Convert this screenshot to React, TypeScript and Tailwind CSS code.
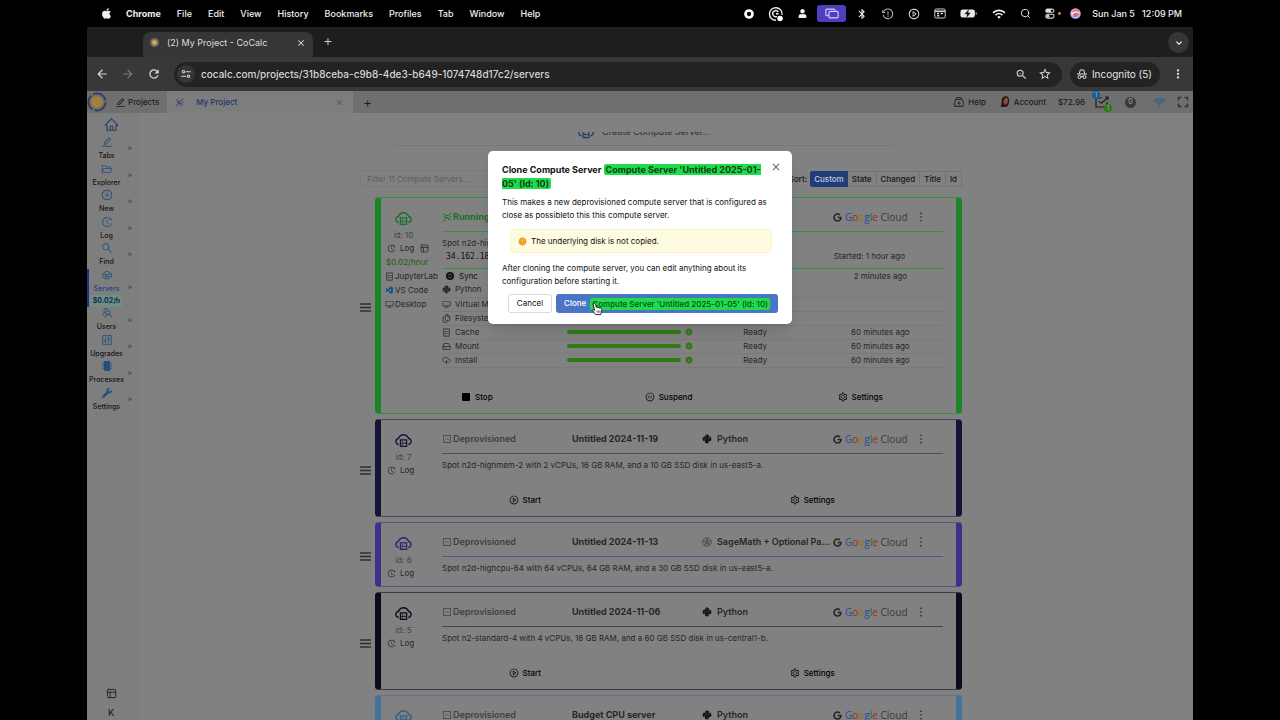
import React from "react";
import {
  AiFillApple,
  AiFillCheckCircle,
  AiFillExclamationCircle,
  AiOutlineCloudServer,
  AiOutlineControl,
  AiOutlineDatabase,
  AiOutlineDesktop,
  AiOutlineEdit,
  AiOutlineFolderOpen,
  AiOutlineHistory,
  AiOutlineHome,
  AiOutlineMedicineBox,
  AiOutlineMinusSquare,
  AiOutlineMore,
  AiOutlinePauseCircle,
  AiOutlinePlayCircle,
  AiOutlinePlusCircle,
  AiOutlineSearch,
  AiOutlineSetting,
  AiOutlineTeam,
  AiOutlineWifi,
} from "react-icons/ai";
import { FaGoogle, FaMicrochip, FaPython, FaUser, FaWrench } from "react-icons/fa";
import {
  MdArrowBack,
  MdArrowForward,
  MdBluetooth,
  MdClose,
  MdExpandMore,
  MdFullscreen,
  MdMoreVert,
  MdOutlineZoomOut,
  MdRefresh,
  MdStarBorder,
  MdWifi,
} from "react-icons/md";
import { VscVscode } from "react-icons/vsc";
import { CloudUpload, Files, HardDrive, PanelsTopLeft, Search } from "lucide-react";

type Icon = React.ComponentType<{ className?: string }>;

function BoltIcon({ className }: { className?: string }) {
  return (
    <svg viewBox="0 0 16 16" className={className} fill="none" stroke="currentColor" strokeWidth="1.500" strokeLinecap="round" strokeLinejoin="round">
      <path d="M14.500 1.500 10 5.500H5.500L4 8.500l4 .5-6.500 6M8 9l3.500.5L10 13" />
      <path d="M3 3.500h1.500M13.500 7.500h1M13.500 12.500h.5" />
    </svg>
  );
}

function IncognitoIcon({ className }: { className?: string }) {
  return (
    <svg viewBox="0 0 24 24" className={className} fill="none" stroke="currentColor" strokeWidth="2">
      <path d="M2 12h20M6.500 11.500 8.500 4h7l2 7.500" />
      <circle cx="7" cy="18" r="3" />
      <circle cx="17" cy="18" r="3" />
      <path d="M10 17.500q2-1 4 0" />
    </svg>
  );
}

function TuneIcon({ className }: { className?: string }) {
  return (
    <svg viewBox="0 0 16 16" className={className} fill="none" stroke="currentColor" strokeWidth="1.700" strokeLinecap="round">
      <circle cx="4" cy="4.500" r="2" />
      <path d="M8.500 4.500H15M1 11.500h6.500" />
      <circle cx="12" cy="11.500" r="2" />
    </svg>
  );
}

function SageIcon({ className }: { className?: string }) {
  return (
    <svg viewBox="0 0 16 16" className={className} fill="none" stroke="#3a3a3a" strokeWidth="1.100" strokeLinejoin="round">
      <circle cx="8" cy="8" r="6.800" />
      <path d="m8 4.500 3.500 2.500-1.300 4H5.800L4.500 7zM8 4.500V1.200M11.500 7l3-1M10.200 11l2 2.500M5.800 11l-2 2.500M4.500 7l-3-1M8 8.500v-4M8 8.500 5.800 11M8 8.500l2.200 2.500" />
    </svg>
  );
}

function HandleIcon({ className }: { className?: string }) {
  return (
    <svg viewBox="0 0 11 9" className={className} stroke="currentColor" strokeWidth="1.300">
      <path d="M0 1h11M0 4.500h11M0 8h11" />
    </svg>
  );
}

function CoCalcLogo({ className }: { className?: string }) {
  return (
    <svg viewBox="0 0 20 20" className={className}>
      <circle cx="10" cy="10" r="8.600" fill="none" stroke="#2a3f66" strokeWidth="1.800" strokeDasharray="16 2" />
      <circle cx="10" cy="10" r="5.800" fill="#a5803c" />
    </svg>
  );
}

const menus = ["File", "Edit", "View", "History", "Bookmarks", "Profiles", "Tab", "Window", "Help"];

function MenuBar() {
  return (
    <header className="flex h-[27px] items-center justify-between bg-black pr-[11px] pl-[13px] text-[9px] font-medium text-[#f0f0f0]">
      <nav className="flex items-center gap-4">
        <AiFillApple className="-mr-[3px] size-[13px]" />
        <span className="font-bold">Chrome</span>
        {menus.map((m) => (
          <span key={m}>{m}</span>
        ))}
      </nav>
      <div className="flex items-center gap-[14px]">
        <svg viewBox="0 0 12 12" className="size-[10px]">
          <circle cx="6" cy="6" r="4.200" fill="none" stroke="#fff" strokeWidth="3.200" />
        </svg>
        <svg viewBox="0 0 16 16" className="size-4" fill="none" stroke="#eee" strokeWidth="1.400">
          <path d="M14 9A6.300 6.300 0 1 0 8 14.300" />
          <path d="M10.200 6A3 3 0 1 0 9 10.300M8 7.800h2.500" />
          <circle cx="12" cy="12.500" r="2.800" fill="#fff" stroke="none" />
        </svg>
        <FaUser className="size-[9px]" />
        <span className="-mx-1 flex h-[17px] w-[29px] items-center justify-center rounded-[3px] bg-[#4f3fbf]">
          <svg viewBox="0 0 16 12" className="h-[11px] w-[14px]" fill="none" stroke="#cfd0ff" strokeWidth="1.300">
            <path d="M4 8.500H2.500A1.500 1.500 0 0 1 1 7V2.500A1.500 1.500 0 0 1 2.500 1H10a1.500 1.500 0 0 1 1.500 1.500" />
            <rect x="4.500" y="3.500" width="10.500" height="7.500" rx="1.500" />
          </svg>
        </span>
        <MdBluetooth className="size-3" />
        <svg viewBox="0 0 16 16" className="size-3" fill="none" stroke="#b5b5b5" strokeWidth="1.400">
          <path d="M2 5a6.500 6.500 0 1 1-.5 4" />
          <path d="M1 3v3h3M8 4.500v4.500M8 10.300v1.300" />
        </svg>
        <AiOutlinePlayCircle className="size-3" />
        <svg viewBox="0 0 16 14" className="h-[11px] w-3" fill="none" stroke="#d8d8d8" strokeWidth="1.300">
          <rect x="1" y="1" width="14" height="12" rx="2" />
          <path d="M1 4h14M4 7h3M9 7h3M4 10h3" strokeWidth="1.700" />
        </svg>
        <svg viewBox="0 0 20 10" className="h-[9px] w-[18px]">
          <rect x="0.500" y="0.500" width="16" height="9" rx="2.500" fill="#e8e8e8" />
          <path d="M18 3.500v3" stroke="#888" strokeWidth="1.500" />
          <path d="M10 0 5 5.700h3L7 10l5-5.700H9z" fill="#111" />
        </svg>
        <MdWifi className="size-[14px]" />
        <Search className="size-[11px]" />
        <svg viewBox="0 0 18 12" className="h-[11px] w-[17px]">
          <rect x="0" y="0.500" width="10" height="4.800" rx="2.400" fill="#ddd" />
          <circle cx="7.500" cy="2.900" r="1.400" fill="#000" />
          <rect x="0.600" y="6.800" width="9" height="4.200" rx="2.100" fill="none" stroke="#ddd" strokeWidth="1.200" />
          <circle cx="3" cy="8.900" r="1.500" fill="#ddd" />
          <circle cx="15.500" cy="6" r="1.600" fill="#d98a3d" />
        </svg>
        <svg viewBox="0 0 12 12" className="-ml-[6px] size-[11px]">
          <circle cx="6" cy="6" r="5.700" fill="#c9b8ea" />
          <circle cx="6.500" cy="5.500" r="3.800" fill="#f0606d" />
          <path d="M2 7q4-5 8-1" stroke="#fff" strokeWidth="1.200" fill="none" />
          <path d="M3 9q4 1 6-2" stroke="#5aa0f0" strokeWidth="1.200" fill="none" />
        </svg>
        <span className="-ml-[3px] whitespace-pre">Sun Jan 5&nbsp;&nbsp; 12:09 PM</span>
      </div>
    </header>
  );
}

function BrowserChrome() {
  return (
    <>
      <div className="flex h-[30px] items-end bg-[#1e1e1e] pl-14">
        <div className="flex h-[25px] w-[170px] items-center gap-2 rounded-t-lg bg-[#363636] px-[7px] pb-1 text-[9px] text-[#dedede]">
          <span className="flex size-[9px] rounded-full border-2 border-[#6e6a5c] bg-[#d5a44e]" />
          <span className="flex-1">(2) My Project - CoCalc</span>
          <button aria-label="Close tab">
            <MdClose className="size-[10px]" />
          </button>
        </div>
        <button aria-label="New tab" className="ml-[10px] h-[30px] pb-[3px] text-[15px] leading-[27px] font-light text-[#d0d0d0]">
          +
        </button>
        <button aria-label="Search tabs" className="mr-1 mb-1 ml-auto flex size-[21px] items-center justify-center rounded-full bg-[#363636] text-white">
          <MdExpandMore className="size-3" />
        </button>
      </div>
      <div className="flex h-[34px] items-center bg-[#383838] px-2 text-[#d6d6d6]">
        <button aria-label="Back">
          <MdArrowBack className="size-[14px]" />
        </button>
        <button aria-label="Forward" className="ml-3 text-[#777]">
          <MdArrowForward className="size-[14px]" />
        </button>
        <button aria-label="Reload" className="mr-[13px] ml-3">
          <MdRefresh className="size-[14px]" />
        </button>
        <div className="flex h-[25px] flex-1 items-center gap-[6px] rounded-full bg-[#232323] pr-[10px] pl-[3px]">
          <span className="flex size-[18px] items-center justify-center rounded-full bg-[#353535]">
            <TuneIcon className="size-[10px]" />
          </span>
          <input
            aria-label="Address"
            readOnly
            value="cocalc.com/projects/31b8ceba-c9b8-4de3-b649-1074748d17c2/servers"
            className="min-w-0 flex-1 bg-transparent text-[10px] font-medium outline-none"
          />
          <MdOutlineZoomOut className="size-[13px]" />
          <MdStarBorder className="ml-1 size-[14px]" />
        </div>
        <button className="ml-2 flex h-[25px] items-center gap-1 rounded-full bg-[#232323] pr-2 pl-[6px] text-[10px] text-[#e4e4e4]">
          <IncognitoIcon className="size-3" />
          Incognito (5)
        </button>
        <button aria-label="Browser menu" className="ml-[11px]">
          <MdMoreVert className="size-[14px]" />
        </button>
      </div>
    </>
  );
}

function AppNav() {
  return (
    <div className="flex h-[22px] items-center bg-[#6f6f6f] text-[8px] font-medium text-[#1c1c1c]">
      <CoCalcLogo className="size-5" />
      <a href="#projects" className="flex h-full items-center gap-[2px] px-2">
        <AiOutlineEdit className="size-[11px]" />
        Projects
      </a>
      <div className="flex h-full w-[186px] items-center bg-[#7d7d7d] pr-[9px] pl-2 text-[#1d3566]">
        <BoltIcon className="size-[9px]" />
        <span className="ml-3 flex-1">My Project</span>
        <MdClose className="size-[9px] text-[#555]" />
      </div>
      <button aria-label="Open project" className="ml-[10px] text-[13px] leading-none font-normal">
        +
      </button>
      <div className="ml-auto flex items-center pr-px">
        <a href="#help" className="flex items-center gap-[3px]">
          <AiOutlineMedicineBox className="size-3" />
          Help
        </a>
        <a href="#account" className="ml-[14px] flex items-center gap-1">
          <svg viewBox="0 0 12 14" className="h-3 w-[10px]">
            <path d="M7 0C3 0 2 3 2 6c0 3-1 5-1 7h6c3-1 4-4 4-7 0-4-1-6-4-6z" fill="#2b1a14" />
            <ellipse cx="7" cy="6" rx="2.500" ry="4" fill="#80523b" transform="rotate(12 7 6)" />
          </svg>
          Account
        </a>
        <span className="ml-3">$72.96</span>
        <span className="relative ml-[10px] flex">
          <svg viewBox="0 0 14 12" className="h-3 w-[14px]" fill="none" stroke="#1c1c1c" strokeWidth="1.200">
            <path d="M7 2H1v9h11V6" />
            <path d="m4 5.500 2.500 1.500L13 1.500M10 1h3v3" />
          </svg>
          <span className="absolute -top-[5px] -left-[3px] size-[8px] rounded-full bg-[#14609c] text-center text-[6px] leading-[8px] text-[#aaa]">1</span>
          <span className="absolute -right-[3px] -bottom-[4px] size-[8px] rounded-full bg-[#2c7a17] text-center text-[6px] leading-[8px] text-[#aaa]">1</span>
        </span>
        <span className="ml-4 flex size-[11px] items-center justify-center rounded-full bg-[#3a3a3a] text-[7px] text-[#999]">0</span>
        <AiOutlineWifi className="ml-[17px] size-[13px] text-[#155a94]" />
        <MdFullscreen className="ml-2 size-[18px] text-[#333]" />
      </div>
    </div>
  );
}

const sideItems: { label: string; icon: Icon; price?: string }[] = [
  { label: "Tabs", icon: AiOutlineEdit },
  { label: "Explorer", icon: AiOutlineFolderOpen },
  { label: "New", icon: AiOutlinePlusCircle },
  { label: "Log", icon: AiOutlineHistory },
  { label: "Find", icon: AiOutlineSearch },
  { label: "Servers", icon: AiOutlineCloudServer, price: "$0.02/h" },
  { label: "Users", icon: AiOutlineTeam },
  { label: "Upgrades", icon: AiOutlineControl },
  { label: "Processes", icon: FaMicrochip },
  { label: "Settings", icon: FaWrench },
];

function Sidebar() {
  return (
    <aside className="flex w-[53px] shrink-0 flex-col bg-[#7e7e7e] text-[7px] font-medium text-[#161616]">
      <a href="#home" aria-label="Home" className="flex h-[23px] items-center justify-center pr-[5px] text-[#1f3d63]">
        <AiOutlineHome className="size-[15px]" />
      </a>
      <nav className="flex h-[277px] flex-col justify-between">
        {sideItems.map(({ label, icon: I, price }) => (
          <a
            href="#section"
            key={label}
            className={`flex items-center border-l-2 ${price ? "border-[#16377f] text-[#1a418f]" : "border-transparent"}`}
          >
            <span className="flex w-[35px] flex-col items-center">
              <span className="flex size-3 items-center justify-center text-[#22507d]">
                <I className={I === FaMicrochip || I === FaWrench ? "size-[10px]" : "size-3"} />
              </span>
              <span className="mt-[2px] leading-3">{label}</span>
              {price && <b className="bg-[#6f8f85] px-[2px] leading-3 text-[#0d2c4f]">{price}</b>}
            </span>
            <span className="ml-1 text-[5px] text-[#5a5a5a]">▶</span>
          </a>
        ))}
      </nav>
      <div className="mt-auto flex flex-col items-center gap-[8px] pr-[5px] pb-px text-[#1c1c1c]">
        <PanelsTopLeft className="size-[11px]" />
        <span className="text-[9px] leading-3">K</span>
      </div>
    </aside>
  );
}

function GoogleCloud() {
  return (
    <span className="flex items-center gap-[3px]">
      <FaGoogle className="size-[9px] text-[#262626]" />
      <span className="font-['Open_Sans',sans-serif] text-[10px] leading-[14px] font-medium whitespace-nowrap">
        <span className="text-[#1f4f9c]">G</span>
        <span className="text-[#9c2a22]">o</span>
        <span className="text-[#a56f0c]">o</span>
        <span className="text-[#1f4f9c]">g</span>
        <span className="text-[#1c6d36]">l</span>
        <span className="text-[#9c2a22]">e</span>
        <span className="text-[#37393c]"> Cloud</span>
      </span>
    </span>
  );
}

type Server = {
  id: number;
  title: string;
  spec: string;
  image: string;
  imageIcon: Icon;
  frame: string;
  rule: string;
  tint: string;
  actions: { label: string; icon: Icon }[];
  running?: boolean;
};

function StopIcon({ className }: { className?: string }) {
  return (
    <svg viewBox="0 0 10 10" className={className}>
      <rect x="1" y="1" width="8" height="8" rx="1" fill="currentColor" />
    </svg>
  );
}

const start = { label: "Start", icon: AiOutlinePlayCircle };
const settings = { label: "Settings", icon: AiOutlineSetting };

const servers: Server[] = [
  {
    id: 10,
    title: "Untitled 2025-01-05",
    spec: "Spot n2d-highmem-2 with 2 vCPUs, 16 GB RAM, and a 10 GB SSD disk in us-east5-a.",
    image: "Python",
    imageIcon: FaPython,
    frame: "border-x-[#1c8527] border-y-[#2f943b]",
    rule: "border-[#2f943b]",
    tint: "text-[#1a7023]",
    actions: [{ label: "Stop", icon: StopIcon }, { label: "Suspend", icon: AiOutlinePauseCircle }, settings],
    running: true,
  },
  {
    id: 7,
    title: "Untitled 2024-11-19",
    spec: "Spot n2d-highmem-2 with 2 vCPUs, 16 GB RAM, and a 10 GB SSD disk in us-east5-a.",
    image: "Python",
    imageIcon: FaPython,
    frame: "border-x-[#14143a] border-y-[#4a4a58]",
    rule: "border-[#4d4d5c]",
    tint: "text-[#14143f]",
    actions: [start, settings],
  },
  {
    id: 6,
    title: "Untitled 2024-11-13",
    spec: "Spot n2d-highcpu-64 with 64 vCPUs, 64 GB RAM, and a 30 GB SSD disk in us-east5-a.",
    image: "SageMath + Optional Pa...",
    imageIcon: SageIcon,
    frame: "border-x-[#402e8a] border-y-[#5a5580]",
    rule: "border-[#5a5580]",
    tint: "text-[#2e2372]",
    actions: [],
  },
  {
    id: 5,
    title: "Untitled 2024-11-06",
    spec: "Spot n2-standard-4 with 4 vCPUs, 16 GB RAM, and a 60 GB SSD disk in us-central1-b.",
    image: "Python",
    imageIcon: FaPython,
    frame: "border-x-[#0b0b1c] border-y-[#3c3c46]",
    rule: "border-[#44444e]",
    tint: "text-[#0b0b1c]",
    actions: [start, settings],
  },
  {
    id: 4,
    title: "Budget CPU server",
    spec: "",
    image: "Python",
    imageIcon: FaPython,
    frame: "border-x-[#437399] border-y-[#5a7488]",
    rule: "border-[#5a7488]",
    tint: "text-[#2f5f86]",
    actions: [],
  },
];

const services: { name: string; icon: Icon; when?: string }[] = [
  { name: "Python", icon: FaPython },
  { name: "Virtual Machine", icon: AiOutlineDesktop },
  { name: "Filesystem", icon: Files },
  { name: "Cache", icon: AiOutlineDatabase, when: "60 minutes ago" },
  { name: "Mount", icon: HardDrive, when: "60 minutes ago" },
  { name: "Install", icon: CloudUpload, when: "60 minutes ago" },
];

function SyncIcon({ className }: { className?: string }) {
  return (
    <svg viewBox="0 0 12 12" className={className}>
      <circle cx="6" cy="6" r="6" fill="#111" />
      <path d="M3.500 5.500a2.700 2.700 0 0 1 4.800-1M8.500 6.500a2.700 2.700 0 0 1-4.800 1" stroke="#818181" strokeWidth="1.200" fill="none" />
    </svg>
  );
}

function RunningDetails() {
  return (
    <>
      <div className="flex items-end justify-between border-b border-[#2f943b] pt-[5px] pb-[5px]">
        <div className="min-w-0">
          <p className="w-[200px] truncate leading-[13px]">Spot n2d-highmem-2 with 2 vCPUs</p>
          <p className="pl-1 font-['DejaVu_Sans_Mono',monospace] leading-[13px] text-[#111]">34.162.187.24</p>
        </div>
        <span className="mr-[38px] leading-[14px]">Started: 1 hour ago</span>
      </div>
      <table className="w-full table-fixed border-collapse leading-[13px]">
        <tbody>
          <tr className="h-[14px] text-[#111]">
            <td className="py-0">
              <span className="flex items-center gap-[5px] pl-1">
                <SyncIcon className="size-2" />
                Sync
              </span>
            </td>
            <td />
            <td />
            <td className="py-0 text-center text-[#262626]">2 minutes ago</td>
          </tr>
          {services.map(({ name, icon: I, when }) => (
            <tr key={name} className="h-[14px] border-b border-[#797979]">
              <td className="py-0">
                <span className="flex items-center gap-1">
                  <I className="size-[9px]" />
                  {name}
                </span>
              </td>
              <td className="py-0">
                <span className="flex items-center gap-1 text-[#2f7a16]">
                  <span className="h-1 flex-1 rounded-full bg-[#2f7a16]" />
                  <AiFillCheckCircle className="size-[8px]" />
                </span>
              </td>
              <td className="py-0 text-center">Ready</td>
              <td className="py-0 text-center">{when}</td>
            </tr>
          ))}
        </tbody>
      </table>
    </>
  );
}

function ServerCard({ server: s }: { server: Server }) {
  const StateIcon = s.running ? BoltIcon : AiOutlineMinusSquare;
  const height = s.running ? "h-[217px]" : s.actions.length ? "h-[98px]" : "h-[65px]";
  return (
    <article className="flex items-center">
      <button aria-label="Reorder" className="w-[15px] pt-1 text-[#2f2f2f]">
        <HandleIcon className="h-[9px] w-[11px]" />
      </button>
      <div className={`flex min-w-0 flex-1 flex-col rounded-[4px] border-x-[6px] border-y text-[8px] text-[#262626] ${s.frame} ${height}`}>
        <div className="flex">
          <div className="flex w-[61px] shrink-0 flex-col pt-[11px]">
            <div className="flex w-[45px] flex-col items-center">
              <AiOutlineCloudServer className={`size-[19px] ${s.tint}`} />
              <span className="leading-[14px] text-[#444]">id: {s.id}</span>
            </div>
            <button className="flex items-center gap-1 pl-[6px] leading-[13px]">
              <AiOutlineHistory className="size-[9px]" />
              Log
              {s.running && <PanelsTopLeft className="ml-[2px] size-[9px]" />}
            </button>
            {s.running && (
              <>
                <span className="pl-[5px] leading-[14px] text-[#245a12]">$0.02/hour</span>
                <a href="#jupyter" className="flex items-center gap-[1px] pl-1 leading-[14px]">
                  <AiOutlineDatabase className="size-[9px]" />
                  JupyterLab
                </a>
                <a href="#vscode" className="flex items-center gap-[1px] pl-1 leading-[14px]">
                  <VscVscode className="size-[9px] text-[#0f4f86]" />
                  VS Code
                </a>
                <a href="#desktop" className="flex items-center gap-[1px] pl-1 leading-[14px]">
                  <AiOutlineDesktop className="size-[9px]" />
                  Desktop
                </a>
              </>
            )}
          </div>
          <div className="mr-[13px] min-w-0 flex-1">
            <div className={`grid h-[34px] grid-cols-[130px_130px_131px_1fr] items-center border-b pt-[5px] text-[9px] font-semibold ${s.rule}`}>
              <span className={`flex items-center gap-px ${s.running ? "font-bold text-[#1a7023]" : "text-[#404040]"}`}>
                <StateIcon className="size-[10px]" />
                {s.running ? "Running" : "Deprovisioned"}
              </span>
              <span className="font-bold">{s.title}</span>
              <span className="flex items-center gap-[5px] whitespace-nowrap">
                <s.imageIcon className="size-[10px] shrink-0 text-[#151515]" />
                {s.image}
              </span>
              <span className="flex items-center">
                <GoogleCloud />
                <button aria-label="More" className="ml-[6px] text-[#111]">
                  <AiOutlineMore className="size-[14px]" />
                </button>
              </span>
            </div>
            {s.running ? <RunningDetails /> : <p className="pt-1 leading-[14px]">{s.spec}</p>}
          </div>
        </div>
        {s.actions.length > 0 && (
          <div className="mt-auto flex pb-[9px] font-medium text-black">
            {s.actions.map(({ label, icon: I }) => (
              <button key={label} className="flex flex-1 items-center justify-center gap-1 leading-[14px]">
                <I className="size-[10px]" />
                {label}
              </button>
            ))}
          </div>
        )}
      </div>
    </article>
  );
}

function ServerList() {
  return (
    <main className="min-w-0 flex-1 overflow-hidden pt-[19px]">
      <div className="mx-auto flex max-w-[613px] flex-col pr-[11px]">
        <div className="ml-[33px] mr-[67px] flex h-[14px] items-end justify-center overflow-hidden border-b border-[#777]">
          <button className="mb-1 flex items-center gap-[7px] text-[9px] leading-[18px] font-medium text-[#3a3a3a]">
            <AiOutlineCloudServer className="size-[18px] text-[#1f3d63]" />
            Create Compute Server...
          </button>
        </div>
        <div className="mt-[24px] mb-[10px] flex h-[17px] items-center justify-between text-[8px] font-medium text-[#161616]">
          <input
            aria-label="Filter compute servers"
            placeholder="Filter 11 Compute Servers..."
            className="h-full w-[180px] rounded-[3px] border border-[#7a7a7a] px-[6px] font-normal outline-none placeholder:text-[#5c5c5c]"
          />
          <div className="flex h-[16px] items-center">
            <span className="mr-[3px]">Sort:</span>
            <button className="h-full rounded-l-[2px] bg-[#1f3d78] px-1 text-[#c8ccd8]">Custom</button>
            {["State", "Changed", "Title", "Id"].map((l) => (
              <button key={l} className="h-full border-y border-r border-[#747474] px-1">
                {l}
              </button>
            ))}
          </div>
        </div>
        <div className="flex flex-col gap-[5px]">
          {servers.map((s) => (
            <ServerCard key={s.id} server={s} />
          ))}
        </div>
      </div>
    </main>
  );
}

function CloneDialog() {
  return (
    <div className="absolute inset-x-0 top-[151px] flex justify-center">
      <section
        role="dialog"
        aria-label="Clone Compute Server"
        className="relative w-[304px] rounded-[5px] bg-white px-[14px] pt-3 pb-[11px] text-[8px] leading-[13px] text-[#111] shadow-lg"
      >
        <button aria-label="Close" className="absolute top-[10px] right-[10px] text-[#666]">
          <MdClose className="size-3" />
        </button>
        <h2 className="w-[266px] text-[9px] leading-[14px] font-bold text-[#111]">
          Clone Compute Server <mark className="rounded-[2px] bg-[#1fdc4a] px-[2px] text-[#0c3d14]">Compute Server 'Untitled 2025-01-05' (Id: 10)</mark>
        </h2>
        <p className="mt-[5px]">This makes a new deprovisioned compute server that is configured as close as possibleto this this compute server.</p>
        <p className="mt-[7px] mr-[6px] ml-2 flex h-6 items-center gap-1 rounded-[4px] border border-[#fbf3c4] bg-[#fffbe0] px-[7px]">
          <AiFillExclamationCircle className="size-[9px] text-[#f0a020]" />
          The underlying disk is not copied.
        </p>
        <p className="mt-[9px] w-[256px]">After cloning the compute server, you can edit anything about its configuration before starting it.</p>
        <div className="mt-[6px] flex justify-end gap-1">
          <button className="h-[19px] rounded-[3px] border border-[#d9d9d9] px-2">Cancel</button>
          <button className="relative flex h-[19px] items-center gap-1 rounded-[3px] bg-[#4a74c4] px-2 font-medium whitespace-nowrap text-white">
            Clone
            <mark className="rounded-[2px] bg-[#1fdc4a] px-[2px] leading-3 text-[#0c4a18]">Compute Server 'Untitled 2025-01-05' (Id: 10)</mark>
            <svg viewBox="0 0 16 18" className="absolute top-2 left-[35px] h-[14px] w-3">
              <path
                d="M4 1.500c1.200-.4 2 .3 2.200 1.200L7 6.500l5.500 1.200c1.500.4 2 1.500 1.900 2.800l-.6 3.500-.9 2.500H6.200L2.300 11.500c-.9-1.200.6-2.200 1.600-1.300l.9.800L3 3.200c-.2-.8.200-1.500 1-1.700z"
                fill="#fff"
                stroke="#111"
                strokeWidth="1.200"
              />
              <path d="M8.200 11v3M10.200 11v3M12 11v3" stroke="#111" strokeWidth=".8" />
            </svg>
          </button>
        </div>
      </section>
    </div>
  );
}

export default function App() {
  return (
    <div className="h-screen overflow-hidden bg-black px-[87px] font-['Inter',sans-serif]">
      <div className="relative flex h-full flex-col">
        <MenuBar />
        <BrowserChrome />
        <AppNav />
        <div className="flex min-h-0 flex-1 bg-[#818181]">
          <Sidebar />
          <ServerList />
        </div>
        <CloneDialog />
      </div>
    </div>
  );
}
